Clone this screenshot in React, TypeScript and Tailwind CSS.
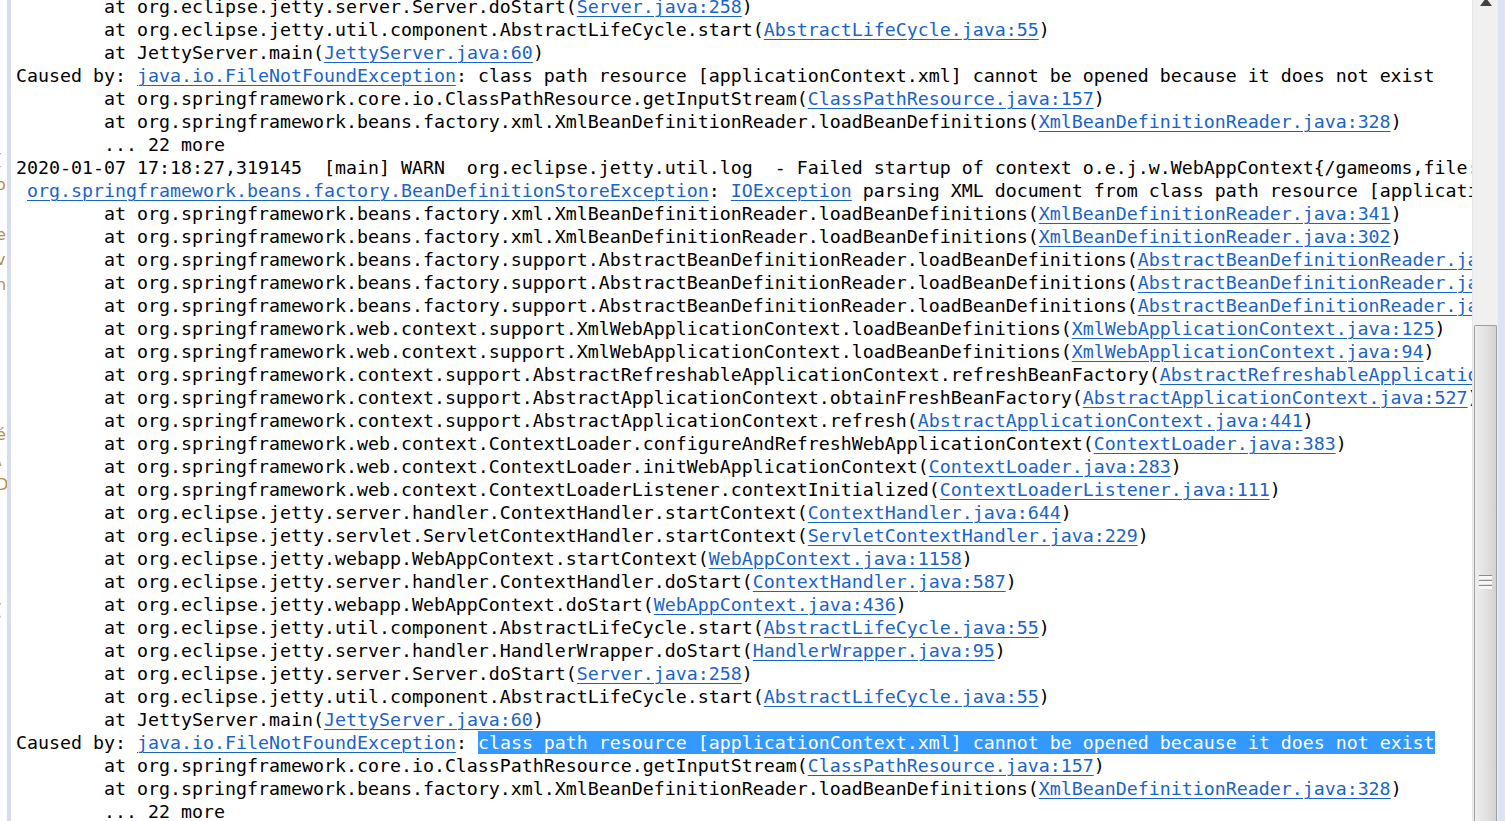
import React from 'react';

type Seg = { t: string; link?: boolean; sel?: boolean };
type Row = Seg[];

const T = '        ';

const at = (call: string, link: string): Row => [
  { t: `${T}at ${call}(` },
  { t: link, link: true },
  { t: ')' },
];

const rows: Row[] = [
  at('org.eclipse.jetty.server.Server.doStart', 'Server.java:258'),
  at('org.eclipse.jetty.util.component.AbstractLifeCycle.start', 'AbstractLifeCycle.java:55'),
  at('JettyServer.main', 'JettyServer.java:60'),
  [
    { t: 'Caused by: ' },
    { t: 'java.io.FileNotFoundException', link: true },
    { t: ': class path resource [applicationContext.xml] cannot be opened because it does not exist' },
  ],
  at('org.springframework.core.io.ClassPathResource.getInputStream', 'ClassPathResource.java:157'),
  at('org.springframework.beans.factory.xml.XmlBeanDefinitionReader.loadBeanDefinitions', 'XmlBeanDefinitionReader.java:328'),
  [{ t: `${T}... 22 more` }],
  [
    {
      t: '2020-01-07 17:18:27,319145  [main] WARN  org.eclipse.jetty.util.log  - Failed startup of context o.e.j.w.WebAppContext{/gameoms,file:/D:/workspace/gameoms/src/main/webapp/,STARTING}',
    },
  ],
  [
    { t: ' ' },
    { t: 'org.springframework.beans.factory.BeanDefinitionStoreException', link: true },
    { t: ': ' },
    { t: 'IOException', link: true },
    { t: ' parsing XML document from class path resource [applicationContext.xml]; nested exception is java.io.FileNotFoundException' },
  ],
  at('org.springframework.beans.factory.xml.XmlBeanDefinitionReader.loadBeanDefinitions', 'XmlBeanDefinitionReader.java:341'),
  at('org.springframework.beans.factory.xml.XmlBeanDefinitionReader.loadBeanDefinitions', 'XmlBeanDefinitionReader.java:302'),
  at('org.springframework.beans.factory.support.AbstractBeanDefinitionReader.loadBeanDefinitions', 'AbstractBeanDefinitionReader.java:143'),
  at('org.springframework.beans.factory.support.AbstractBeanDefinitionReader.loadBeanDefinitions', 'AbstractBeanDefinitionReader.java:178'),
  at('org.springframework.beans.factory.support.AbstractBeanDefinitionReader.loadBeanDefinitions', 'AbstractBeanDefinitionReader.java:149'),
  at('org.springframework.web.context.support.XmlWebApplicationContext.loadBeanDefinitions', 'XmlWebApplicationContext.java:125'),
  at('org.springframework.web.context.support.XmlWebApplicationContext.loadBeanDefinitions', 'XmlWebApplicationContext.java:94'),
  at('org.springframework.context.support.AbstractRefreshableApplicationContext.refreshBeanFactory', 'AbstractRefreshableApplicationContext.java:129'),
  at('org.springframework.context.support.AbstractApplicationContext.obtainFreshBeanFactory', 'AbstractApplicationContext.java:527'),
  at('org.springframework.context.support.AbstractApplicationContext.refresh', 'AbstractApplicationContext.java:441'),
  at('org.springframework.web.context.ContextLoader.configureAndRefreshWebApplicationContext', 'ContextLoader.java:383'),
  at('org.springframework.web.context.ContextLoader.initWebApplicationContext', 'ContextLoader.java:283'),
  at('org.springframework.web.context.ContextLoaderListener.contextInitialized', 'ContextLoaderListener.java:111'),
  at('org.eclipse.jetty.server.handler.ContextHandler.startContext', 'ContextHandler.java:644'),
  at('org.eclipse.jetty.servlet.ServletContextHandler.startContext', 'ServletContextHandler.java:229'),
  at('org.eclipse.jetty.webapp.WebAppContext.startContext', 'WebAppContext.java:1158'),
  at('org.eclipse.jetty.server.handler.ContextHandler.doStart', 'ContextHandler.java:587'),
  at('org.eclipse.jetty.webapp.WebAppContext.doStart', 'WebAppContext.java:436'),
  at('org.eclipse.jetty.util.component.AbstractLifeCycle.start', 'AbstractLifeCycle.java:55'),
  at('org.eclipse.jetty.server.handler.HandlerWrapper.doStart', 'HandlerWrapper.java:95'),
  at('org.eclipse.jetty.server.Server.doStart', 'Server.java:258'),
  at('org.eclipse.jetty.util.component.AbstractLifeCycle.start', 'AbstractLifeCycle.java:55'),
  at('JettyServer.main', 'JettyServer.java:60'),
  [
    { t: 'Caused by: ' },
    { t: 'java.io.FileNotFoundException', link: true },
    { t: ': ' },
    { t: 'class path resource [applicationContext.xml] cannot be opened because it does not exist', sel: true },
  ],
  at('org.springframework.core.io.ClassPathResource.getInputStream', 'ClassPathResource.java:157'),
  at('org.springframework.beans.factory.xml.XmlBeanDefinitionReader.loadBeanDefinitions', 'XmlBeanDefinitionReader.java:328'),
  [{ t: `${T}... 22 more` }],
];

// bits of the neighbouring view that peek out on the left edge
const sideGlyphs = ['', '', '', '[', 'o', '', 'e', 'v', 'n', ':', 'l', '', '', ':', 'é', '\\', 'D', '', '', '', '', '(', ''];

function ScrollBar() {
  return (
    <div className="w-[26px] shrink-0 flex flex-col bg-[#f0f0f0] border-l border-[#e6e6e6]">
      <div className="h-[18px] flex justify-center">
        <div className="mt-[-2px] w-0 h-0 border-l-[6px] border-r-[6px] border-b-[8px] border-l-transparent border-r-transparent border-b-[#404040]" />
      </div>
      <div className="h-[307px]" />
      <div className="flex-1 mx-[1px] rounded-t-[2px] border border-b-0 border-[#9f9f9f] bg-gradient-to-r from-[#eeeeee] via-[#e2e2e2] to-[#d2d2d2] flex flex-col items-center pt-[249px]">
        <div className="w-[13px] flex flex-col gap-[1px]">
          {[0, 1, 2].map((i) => (
            <div key={i} className="h-[4px] border-t border-[#8c8c8c] bg-[#f7f7f7]" />
          ))}
        </div>
      </div>
    </div>
  );
}

export default function App() {
  return (
    <div className="w-[1505px] h-[821px] flex bg-white overflow-hidden">
      <div
        className="w-[7px] shrink-0 overflow-hidden pt-[72px] text-[16px] leading-[25px] text-[#b98d3f]"
        style={{ fontFamily: '"DejaVu Sans", sans-serif' }}
      >
        {sideGlyphs.map((g, i) => (
          <div key={i} className="h-[25px] whitespace-pre ml-[-4px]">
            {g || ' '}
          </div>
        ))}
      </div>
      <div className="w-[4px] shrink-0 bg-[#d7dcee]" />
      <div className="flex-1 overflow-hidden pl-[5px]">
        <div
          className="mt-[-5px] text-[18.27px] leading-[23px] text-black whitespace-pre"
          style={{ fontFamily: '"DejaVu Sans Mono", monospace' }}
        >
          {rows.map((row, i) => (
            <div key={i} className="h-[23px]">
              {row.map((s, j) => (
                <span
                  key={j}
                  className={
                    s.link
                      ? 'text-[#1a64c8] underline decoration-1 underline-offset-[3px]'
                      : s.sel
                        ? 'bg-[#3399ff] text-white inline-block h-[23px]'
                        : ''
                  }
                >
                  {s.t}
                </span>
              ))}
            </div>
          ))}
        </div>
      </div>
      <ScrollBar />
      <div className="w-[7px] shrink-0 bg-[#dde3f4]" />
    </div>
  );
}
